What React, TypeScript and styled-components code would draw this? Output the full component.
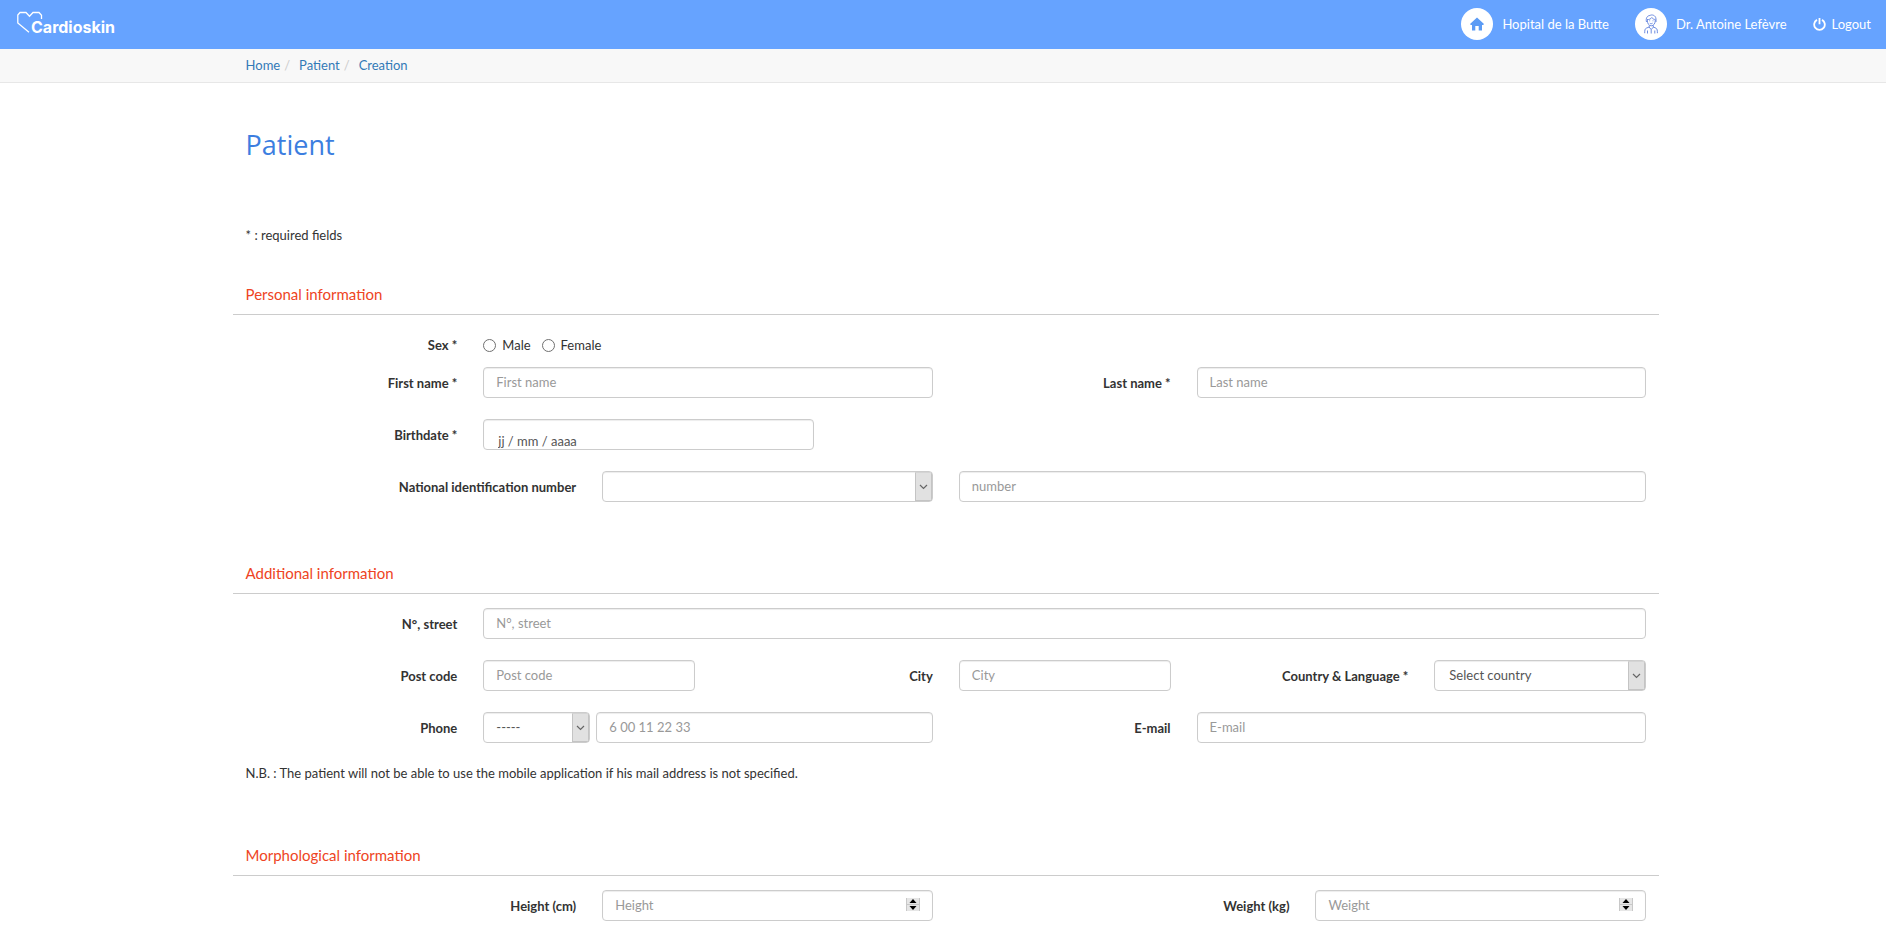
import React from "react";
import styled, { createGlobalStyle } from "styled-components";

const GlobalStyle = createGlobalStyle`
  *, *::before, *::after { box-sizing: border-box; }
  body {
    margin: 0;
    background: #fff;
    color: #333;
    font-family: Lato, "Liberation Sans", sans-serif;
    font-size: 13px;
    line-height: 20px;
  }
  a { text-decoration: none; }
`;

const Navbar = styled.header`
  display: flex;
  align-items: center;
  justify-content: space-between;
  height: 49px;
  padding: 0 15px 1px 17px;
  background: #66a3ff;
`;

const Brand = styled.a`
  display: flex;
  align-items: flex-end;
  color: #fff;
  font: 700 16px/20px Inter, sans-serif;
`;

const BrandHeart = styled.svg`
  width: 26px;
  height: 22px;
  margin: 0 -12px 4px 0;
`;

const NavItems = styled.nav`
  display: flex;
  align-items: center;
  gap: 26px;
`;

const NavLink = styled.a<{ $gap?: number }>`
  display: flex;
  align-items: center;
  gap: ${({ $gap = 9 }) => $gap}px;
  color: #fff;
`;

const Disc = styled.span`
  display: flex;
  align-items: center;
  justify-content: center;
  width: 32px;
  height: 32px;
  border-radius: 50%;
  background: #fff;
`;

const BreadcrumbBar = styled.nav`
  height: 34px;
  padding: 6px 12.03% 0 12.33%;
  background: #f8f8f8;
  border-bottom: 1px solid #e7e7e7;
`;

const Crumbs = styled.ol`
  display: flex;
  margin: 0;
  padding: 0 13px;
  list-style: none;
`;

const Crumb = styled.li`
  & + &::before {
    content: "/";
    padding: 0 9px 0 4px;
    color: #ccc;
  }
  a { color: #337ab7; }
`;

const Page = styled.main`
  padding: 44px 12.03% 14px 12.33%;
`;

const Title = styled.h1`
  margin: 0;
  padding: 0 13px;
  color: #3c7ee0;
  font: 400 27px/36px "Open Sans", sans-serif;
`;

const Note = styled.p<{ $top: number }>`
  margin: ${({ $top }) => $top}px 0 0;
  padding: 0 13px;
`;

const Section = styled.fieldset<{ $top: number }>`
  margin: ${({ $top }) => $top}px 0 0;
  padding: 0;
  border: 0;
  min-width: 0;
`;

const SectionTitle = styled.legend<{ $gap?: number }>`
  display: block;
  width: 100%;
  margin: 0 0 ${({ $gap = 14 }) => $gap}px;
  padding: 0 13px 10px;
  border-bottom: 1px solid #ccc;
  color: #ee4423;
  font-size: 15px;
  line-height: 20px;
`;

const Row = styled.div<{ $top?: number }>`
  display: grid;
  grid-template-columns: repeat(12, minmax(0, 1fr));
  align-items: center;
  margin-top: ${({ $top = 21 }) => $top}px;
  &:first-of-type { margin-top: 0; }
`;

const Label = styled.label<{ $span?: number }>`
  grid-column: span ${({ $span = 2 }) => $span};
  padding: 0 13px;
  font-weight: 700;
  text-align: right;
  white-space: nowrap;
`;

const Cell = styled.div<{ $span: number }>`
  display: flex;
  align-items: center;
  gap: 6px;
  grid-column: span ${({ $span }) => $span};
  padding: 0 13px;
`;

const Input = styled.input`
  flex: 1;
  width: 100%;
  min-width: 0;
  height: 31px;
  padding: 0 12px 1px;
  border: 1px solid #ccc;
  border-radius: 4px;
  box-shadow: inset 0 1px 1px rgba(0, 0, 0, 0.075);
  background: #fff;
  color: #555;
  font: inherit;
  appearance: textfield;
  &::placeholder { color: #999; opacity: 1; }
  &::-webkit-inner-spin-button { appearance: none; }
`;

const DateInput = styled(Input)`
  padding: 13px 14px 0;
`;

const Wrap = styled.div<{ $width?: number }>`
  position: relative;
  display: flex;
  flex: ${({ $width }) => ($width ? `0 0 ${$width}px` : "1")};
  min-width: 0;
`;

const SelectBox = styled.select<{ $inset?: number }>`
  width: 100%;
  height: 31px;
  padding: 0 20px 1px ${({ $inset = 12 }) => $inset}px;
  border: 1px solid #ccc;
  border-radius: 4px;
  box-shadow: inset 0 1px 1px rgba(0, 0, 0, 0.075);
  background: #fff;
  color: #555;
  font: inherit;
  appearance: none;
`;

const Arrow = styled.span`
  position: absolute;
  top: 1px;
  right: 1px;
  bottom: 1px;
  display: flex;
  align-items: center;
  justify-content: center;
  width: 17px;
  border: 1px solid #c4c4c4;
  border-top-color: #d4d4d4;
  border-radius: 0 2px 2px 0;
  background: #e1e1e1;
  pointer-events: none;
`;

const Spinner = styled.svg`
  position: absolute;
  top: 8px;
  right: 13px;
  width: 14px;
  height: 13px;
  pointer-events: none;
`;

const RadioLabel = styled.label`
  display: flex;
  align-items: center;
  gap: 6px;
  margin-right: 5px;
`;

const Radio = styled.input`
  width: 13px;
  height: 13px;
  margin: 0;
  border: 1px solid #707070;
  border-radius: 50%;
  background: #fff;
  appearance: none;
  &:checked { box-shadow: inset 0 0 0 3px #fff; background: #333; }
`;

type SelectProps = { id: string; label?: string; options: string[]; width?: number; inset?: number };

const Select = ({ id, label, options, width, inset }: SelectProps) => (
  <Wrap $width={width}>
    <SelectBox id={id} aria-label={label} $inset={inset}>
      {options.map((o) => (
        <option key={o}>{o}</option>
      ))}
    </SelectBox>
    <Arrow>
      <svg width="9" height="6" viewBox="0 0 9 6" fill="none" stroke="#666" strokeWidth="1.2" aria-hidden="true">
        <path d="M1 1l3.5 3.5L8 1" />
      </svg>
    </Arrow>
  </Wrap>
);

const NumberField = ({ id, placeholder }: { id: string; placeholder: string }) => (
  <Wrap>
    <Input id={id} type="number" placeholder={placeholder} />
    <Spinner viewBox="0 0 14 13" aria-hidden="true">
      <path d="M0 0h14v13H0z" fill="#e6e6e6" />
      <path d="M0 6.500h14M.5 0v13M13.500 0v13" stroke="#c8c8c8" />
      <path d="M7 1l3.500 4h-7zM7 12L3.500 8h7z" fill="#000" />
    </Spinner>
  </Wrap>
);

const HomeIcon = () => (
  <svg width="14" height="14" viewBox="0 0 14 14" fill="#5b9bf5" aria-hidden="true">
    <path d="M7 .5l7 6.500-.8.9H12v5.600H8.700V9H5.300v4.500H2V7.900H.8L0 7z" />
  </svg>
);

const DoctorIcon = () => (
  <svg width="16" height="20" viewBox="0 0 16 20" fill="none" stroke="#5f80dc" strokeWidth=".9" aria-hidden="true">
    <path d="M3.500 8C2.500 4 4.500 1.500 7 1.500 8.500.3 12.800 1 13 5v3M4 5.500c2 .3 3.800-.5 4.800-2 .8 1.300 2 2 3.700 2M4.300 6c0 3.500 1.500 5.800 4 5.800s4-2.300 4-5.800M6.300 6.800h.8M9.600 6.800h.8M6.800 9.200c.8.7 2 .7 2.800 0" />
    <path d="M6.200 11.500V13l-3 1.200c-1.300.7-1.500 2-1.500 5M10.300 11.500V13l2.700 1.200c1.200.7 1.400 2 1.400 5M6 13l2.200 2.500L10.500 13M8.200 15.500v4M4.500 16.500v3M11.800 16.500v3" />
  </svg>
);

const PowerIcon = () => (
  <svg width="13" height="13" viewBox="0 0 13 13" fill="none" stroke="#fff" strokeWidth="1.800" aria-hidden="true">
    <path d="M4 1.900a5.300 5.300 0 1 0 5 0M6.500 0v6.200" />
  </svg>
);

export default function App() {
  return (
    <>
      <GlobalStyle />
      <Navbar>
        <Brand href="#">
          <BrandHeart viewBox="0 0 26 22" fill="none" stroke="#fff" strokeWidth="1.300" aria-hidden="true">
            <path d="M24.500 8V4.200L22 1.500h-6L12.500 5.200 9 1.500H3L.8 4v8L12 21.300" />
          </BrandHeart>
          Cardioskin
        </Brand>
        <NavItems>
          <NavLink href="#">
            <Disc><HomeIcon /></Disc>
            Hopital de la Butte
          </NavLink>
          <NavLink href="#">
            <Disc><DoctorIcon /></Disc>
            Dr. Antoine Lefèvre
          </NavLink>
          <NavLink href="#" $gap={6}>
            <PowerIcon />
            Logout
          </NavLink>
        </NavItems>
      </Navbar>
      <BreadcrumbBar aria-label="Breadcrumb">
        <Crumbs>
          <Crumb><a href="#">Home</a></Crumb>
          <Crumb><a href="#">Patient</a></Crumb>
          <Crumb><a href="#">Creation</a></Crumb>
        </Crumbs>
      </BreadcrumbBar>
      <Page>
        <Title>Patient</Title>
        <form>
          <Note $top={62}>* : required fields</Note>
          <Section $top={39}>
            <SectionTitle $gap={20}>Personal information</SectionTitle>
            <Row role="radiogroup" aria-labelledby="sex">
              <Label as="span" id="sex">Sex *</Label>
              <Cell $span={10}>
                <RadioLabel><Radio type="radio" name="sex" />Male</RadioLabel>
                <RadioLabel><Radio type="radio" name="sex" />Female</RadioLabel>
              </Cell>
            </Row>
            <Row $top={12}>
              <Label htmlFor="first">First name *</Label>
              <Cell $span={4}><Input id="first" placeholder="First name" /></Cell>
              <Label htmlFor="last">Last name *</Label>
              <Cell $span={4}><Input id="last" placeholder="Last name" /></Cell>
            </Row>
            <Row>
              <Label htmlFor="birth">Birthdate *</Label>
              <Cell $span={3}><DateInput id="birth" defaultValue="jj / mm / aaaa" /></Cell>
            </Row>
            <Row>
              <Label $span={3} htmlFor="nid">National identification number</Label>
              <Cell $span={3}><Select id="nid" options={[""]} /></Cell>
              <Cell $span={6}><Input aria-label="Number" placeholder="number" /></Cell>
            </Row>
          </Section>
          <Section $top={61}>
            <SectionTitle>Additional information</SectionTitle>
            <Row>
              <Label htmlFor="street">N°, street</Label>
              <Cell $span={10}><Input id="street" placeholder="N°, street" /></Cell>
            </Row>
            <Row>
              <Label htmlFor="post">Post code</Label>
              <Cell $span={2}><Input id="post" placeholder="Post code" /></Cell>
              <Label htmlFor="city">City</Label>
              <Cell $span={2}><Input id="city" placeholder="City" /></Cell>
              <Label htmlFor="country">Country &amp; Language *</Label>
              <Cell $span={2}><Select id="country" options={["Select country"]} inset={14} /></Cell>
            </Row>
            <Row>
              <Label htmlFor="phone">Phone</Label>
              <Cell $span={4}>
                <Select id="prefix" label="Dialling code" options={["-----"]} width={107} />
                <Input id="phone" type="tel" placeholder="6 00 11 22 33" />
              </Cell>
              <Label htmlFor="mail">E-mail</Label>
              <Cell $span={4}><Input id="mail" type="email" placeholder="E-mail" /></Cell>
            </Row>
            <Note $top={20}>
              N.B. : The patient will not be able to use the mobile application if his mail address is not specified.
            </Note>
          </Section>
          <Section $top={62}>
            <SectionTitle>Morphological information</SectionTitle>
            <Row>
              <Label $span={3} htmlFor="height">Height (cm)</Label>
              <Cell $span={3}><NumberField id="height" placeholder="Height" /></Cell>
              <Label $span={3} htmlFor="weight">Weight (kg)</Label>
              <Cell $span={3}><NumberField id="weight" placeholder="Weight" /></Cell>
            </Row>
          </Section>
        </form>
      </Page>
    </>
  );
}
